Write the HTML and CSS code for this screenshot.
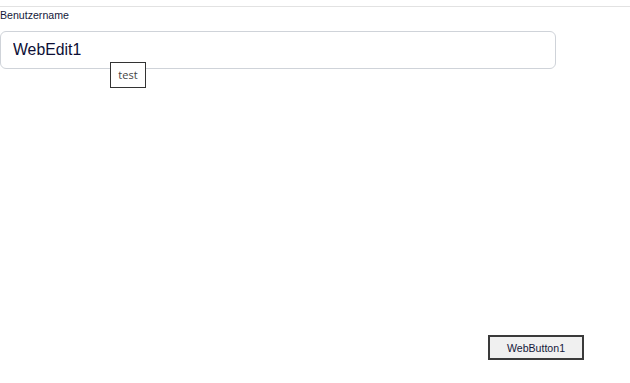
FILE: index.html
```
<!DOCTYPE html>
<html lang="de">

<head>
    <meta charset="UTF-8">
    <meta name="viewport" content="width=device-width, initial-scale=1.0">
    <title>WebForm</title>
    <link rel="stylesheet" href="styles.css">
</head>

<body>
    <div class="rule"></div>

    <div class="field">
        <label for="webEdit1">Benutzername</label>
        <div class="inputWrap">
            <input id="webEdit1" type="text" value="WebEdit1">
            <div class="tooltip">test</div>
        </div>
    </div>

    <div class="actions">
        <button id="webButton1">WebButton1</button>
    </div>
</body>

</html>
```

FILE: styles.css
```
body {
    margin: 0;
    font-family: "Liberation Sans", Arial, sans-serif;
    background: #ffffff;
    overflow: hidden;
}

.rule {
    margin-top: 6px;
    border-top: 1px solid #e2e2e2;
}

.field {
    display: flex;
    flex-direction: column;
    padding-top: 2px;
}

.field label {
    font-size: 10.6px;
    line-height: 13px;
    color: #14183a;
}

.inputWrap {
    position: relative;
    margin-top: 9px;
    width: 556px;
}

.inputWrap input {
    box-sizing: border-box;
    width: 556px;
    height: 38px;
    margin: 0;
    padding: 0 12px;
    border: 1px solid #cfd3d9;
    border-radius: 6px;
    font-family: "Liberation Sans", Arial, sans-serif;
    font-size: 15.8px;
    color: #0d0f36;
    outline: none;
}

/* подсказка поверх поля */
.tooltip {
    position: absolute;
    left: 110px;
    top: 31px;
    box-sizing: border-box;
    width: 36px;
    height: 26px;
    border: 1px solid #333333;
    background: #ffffff;
    font-family: "Open Sans", sans-serif;
    font-size: 11px;
    line-height: 24px;
    text-align: center;
    color: #444444;
}

.actions {
    display: flex;
    justify-content: flex-end;
    padding-right: 46px;
    margin-top: 266px;
}

.actions button {
    box-sizing: border-box;
    width: 96px;
    height: 25px;
    margin: 0;
    padding: 0;
    border: 2px solid #3a3a3a;
    border-radius: 0;
    background: #f0f0f0;
    font-family: "Liberation Sans", Arial, sans-serif;
    font-size: 10.6px;
    color: #14183a;
    cursor: pointer;
}
```
